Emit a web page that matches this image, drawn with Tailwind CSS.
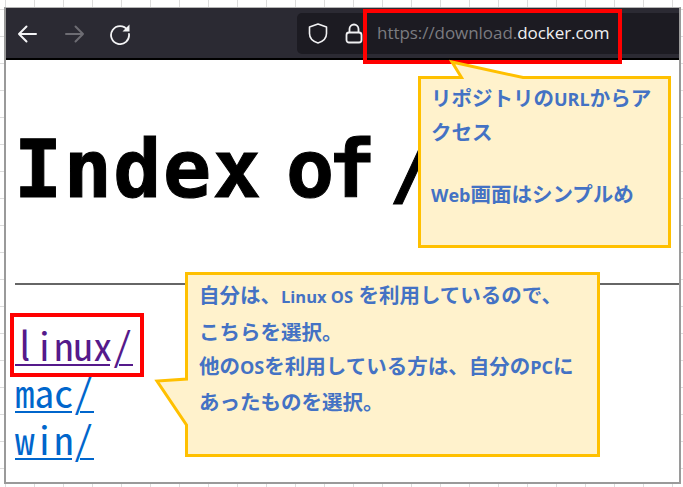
<!DOCTYPE html>
<html><head><meta charset="utf-8"><script src="https://cdn.jsdelivr.net/npm/@tailwindcss/browser@4"></script></head>
<body class="w-[683px] h-[487px] overflow-hidden relative bg-white bg-[linear-gradient(#dcdcdc_1px,transparent_1px),linear-gradient(90deg,#dcdcdc_1px,transparent_1px)] bg-[size:29px_27px] bg-[position:5px_9px]">
<div class="ml-1 mt-[7px] w-[677px] h-[477px] border-2 border-t-[1px] border-[#9a9a9a] border-t-[#b5b5b5] bg-white overflow-hidden font-['DejaVu_Sans_Mono',monospace]">
  <div class="h-[52px] bg-[#2b2a33] border-b-2 border-black flex items-center pl-[11px] pt-[2px]">
    <svg class="w-[22px] h-[22px]" viewBox="0 0 22 22" fill="none" stroke="#f4f4f6" stroke-width="2" stroke-linecap="round" stroke-linejoin="round"><path d="M2 11h17M9.500 3.500 2 11l7.500 7.500"/></svg>
    <svg class="w-[22px] h-[22px] ml-6" viewBox="0 0 22 22" fill="none" stroke="#6d6c73" stroke-width="2" stroke-linecap="round" stroke-linejoin="round"><path d="M3 11h17M12.500 3.500 20 11l-7.500 7.500"/></svg>
    <svg class="w-[22px] h-[22px] ml-6" viewBox="0 0 22 22" fill="none" stroke="#f4f4f6" stroke-width="1.8" stroke-linecap="round"><path d="M18.500 7A9 9 0 1 0 20 11"/><path d="M20.500 1.500v7h-7z" fill="#f4f4f6" stroke="none"/></svg>
    <div class="ml-[166px] flex-1 h-[41px] -mt-[2px] bg-[#1c1b22] rounded-l-[5px] flex items-center pl-[11px]">
      <svg class="w-[20px] h-[21px]" viewBox="0 0 20 21" fill="none" stroke="#f0f0f2" stroke-width="1.6" stroke-linejoin="round"><path d="M10 1 18.500 4v6.500c0 4.500-3.500 8-8.500 9.500C5 18.500 1.500 15 1.500 10.500V4z"/></svg>
      <svg class="w-[18px] h-[21px] ml-[17px]" viewBox="0 0 18 21" fill="none" stroke="#f0f0f2" stroke-width="1.8"><rect x="1.500" y="9.500" width="15" height="10" rx="2.500"/><path d="M4.500 9.500V6a4.500 4.500 0 0 1 9 0v3.500"/></svg>
      <div class="ml-[14px] font-['Open_Sans',sans-serif] text-[17px] tracking-[-0.05px] text-[#7b7b80]">https://download.<span class="text-[#f0f0f2]">docker.com</span></div>
    </div>
  </div>
  <h1 class="ml-[8px] mt-[63px] font-bold text-[80px] leading-[94px] text-black whitespace-pre tracking-[1.5px] [word-spacing:-26px] [-webkit-text-stroke:1px_black]">Index o<span class="-ml-[8px]">f</span> <span class="-ml-[12px]">/</span></h1>
  <hr class="ml-[9px] mt-[66px] border-0 h-[2px] bg-[#666]">
  <div class="ml-[9px] mt-[36px] font-['Noto_Sans_CJK_JP',monospace] text-[39px] leading-[47px] [font-feature-settings:'hwid'] flex flex-col items-start text-[#0066cc]">
    <a class="flex h-[47px] text-[#551a8b]"><span class="flex w-[95px] h-[45px] border-b-2 border-current"><span class="w-[19.500px] shrink-0 text-center [font-feature-settings:normal]">l</span><span class="w-[19.500px] shrink-0 text-center [font-feature-settings:normal]">i</span><span class="w-[19.500px] shrink-0 text-center">n</span><span class="w-[19.500px] shrink-0 text-center">u</span><span class="w-[19.500px] shrink-0 text-center">x</span></span><span class="relative ml-[2.500px] h-[45px] w-[19.500px] text-center">/<span class="absolute left-[6px] bottom-0 w-[14px] h-[2px] bg-current"></span></span></a>
    <a class="flex h-[47px]"><span class="flex w-[57px] h-[45px] border-b-2 border-current"><span class="w-[19.500px] shrink-0 text-center">m</span><span class="w-[19.500px] shrink-0 text-center">a</span><span class="w-[19.500px] shrink-0 text-center">c</span></span><span class="relative ml-[1.500px] h-[45px] w-[19.500px] text-center">/<span class="absolute left-[6px] bottom-0 w-[14px] h-[2px] bg-current"></span></span></a>
    <a class="flex h-[47px]"><span class="flex w-[57px] h-[45px] border-b-2 border-current"><span class="w-[19.500px] shrink-0 text-center">w</span><span class="w-[19.500px] shrink-0 text-center [font-feature-settings:normal]">i</span><span class="w-[19.500px] shrink-0 text-center">n</span></span><span class="relative ml-[1.500px] h-[45px] w-[19.500px] text-center">/<span class="absolute left-[6px] bottom-0 w-[14px] h-[2px] bg-current"></span></span></a>
  </div>
</div>

<div class="absolute left-[10px] top-[313px] w-[134px] h-[64px] border-[4px] border-[#ff0000]"></div>
<div class="absolute left-[363px] top-[9px] w-[259px] h-[55px] border-[4px] border-[#ff0000]"></div>

<svg class="absolute left-0 top-0" width="683" height="487" fill="#fff2cc" stroke="#ffc000" stroke-width="3">
  <path d="M419.500 77.500H461.500L452 62 523 77.500H669.500V246.500H419.500z"/>
  <path d="M186.500 273.500H598.500V455.500H186.500V425L157 381 186.500 379z"/>
</svg>

<div class="absolute left-[431px] top-[82px] w-[232px] font-['Open_Sans','Noto_Sans_CJK_JP',sans-serif] font-bold text-[#4472c4] text-[20.500px] leading-[33px]">
  <p class="whitespace-nowrap">リポジトリの<span class="text-[18px]">URL</span>からア</p><p>クセス</p><p class="mt-[29px]"><span class="text-[18px]">Web</span>画面はシンプルめ</p>
</div>
<div class="absolute left-[199px] top-[278px] w-[395px] font-['Open_Sans','Noto_Sans_CJK_JP',sans-serif] font-bold text-[#4472c4] text-[20.500px] leading-[34.500px] whitespace-nowrap">
  <p>自分は、<span class="text-[16.500px]">Linux OS</span> を利用しているので、</p><p>こちらを選択。</p><p>他の<span class="text-[18px]">OS</span>を利用している方は、自分の<span class="text-[18px]">PC</span>に</p><p>あったものを選択。</p>
</div>
</body></html>
